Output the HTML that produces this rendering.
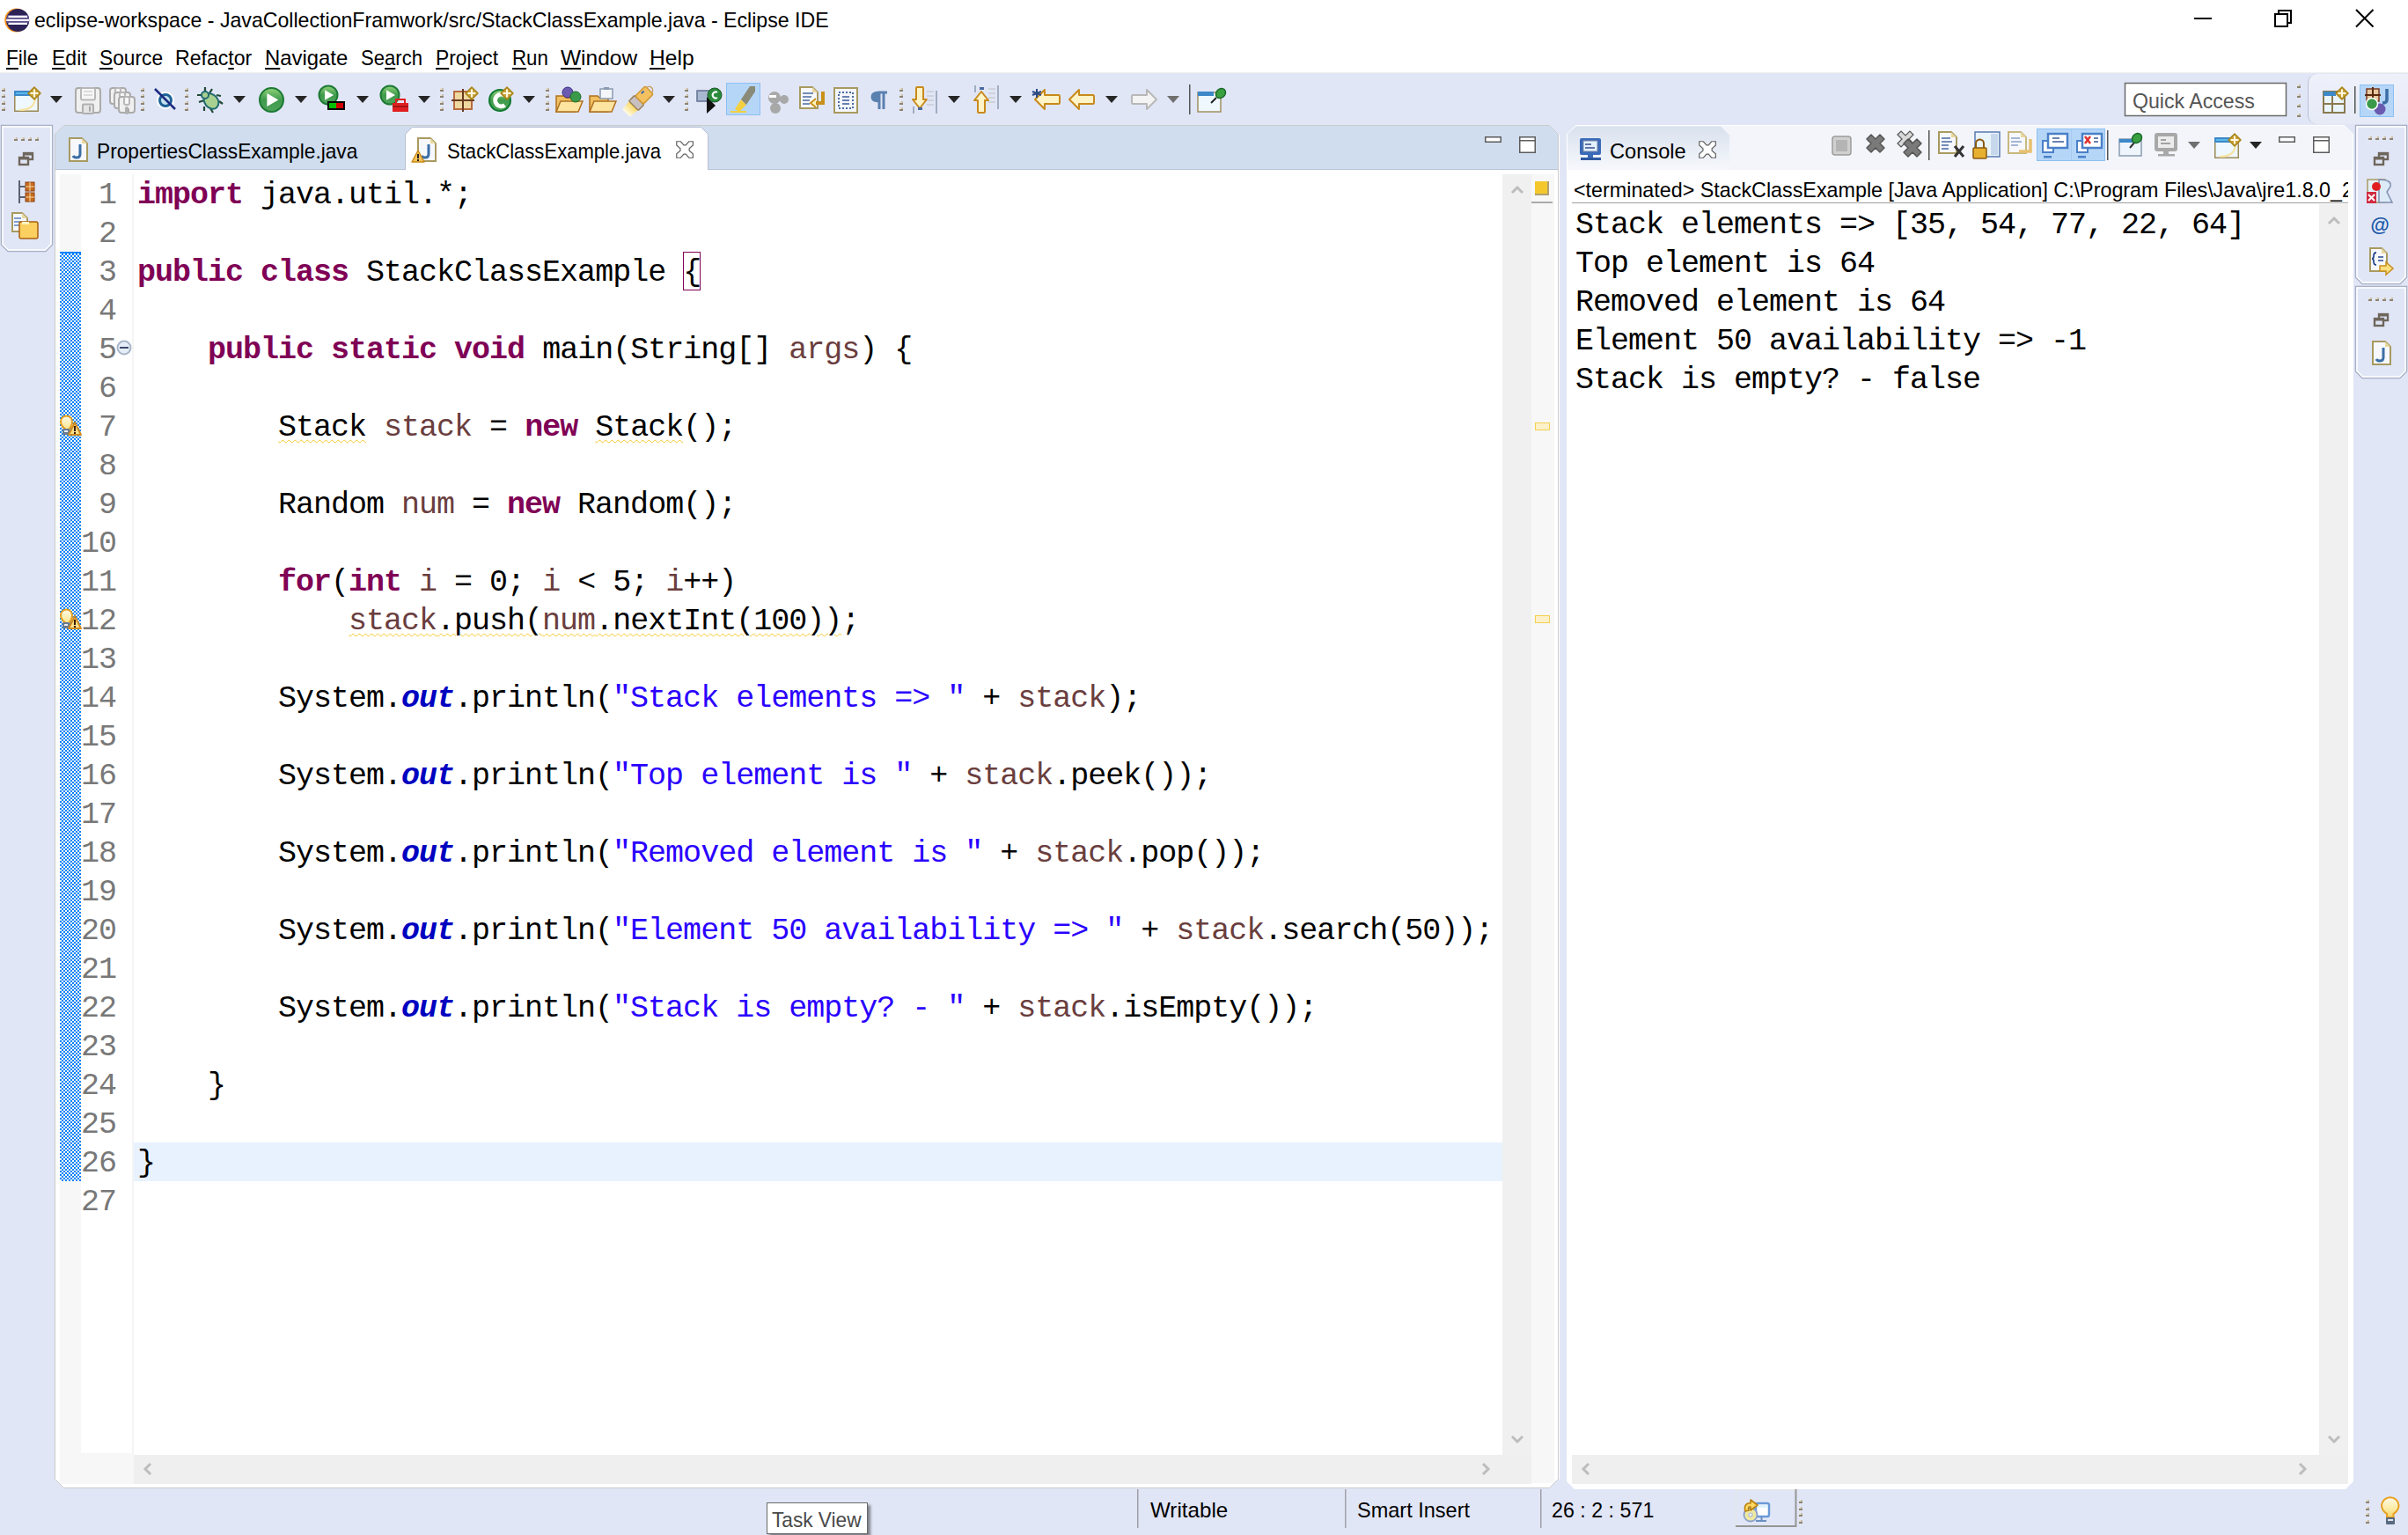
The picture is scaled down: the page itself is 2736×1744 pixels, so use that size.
<!DOCTYPE html>
<html><head><meta charset="utf-8"><title>Eclipse IDE</title>
<style>
html,body{margin:0;padding:0;}
body{width:2736px;height:1744px;overflow:hidden;position:relative;background:#e1e6f6;font-family:"Liberation Sans",sans-serif;}
.t{position:absolute;font-size:24px;line-height:30px;white-space:pre;}
.code{position:absolute;font-family:"Liberation Mono",monospace;font-size:35px;letter-spacing:-1px;line-height:44px;white-space:pre;color:#000;}
.k{color:#7f0055;font-weight:bold;}
.s{color:#2a00ff;}
.v{color:#6a3e3e;}
.f{color:#0000c0;font-weight:bold;font-style:italic;}
.w{text-decoration:underline wavy #f4c82d;text-decoration-thickness:1px;text-underline-offset:4px;}
.u{text-decoration:underline;text-decoration-thickness:2px;text-underline-offset:3px;}
</style></head><body>

<div style="position:absolute;left:0px;top:0px;width:2736px;height:82px;background:#fff"></div>
<div style="position:absolute;left:0px;top:82px;width:2736px;height:1px;background:#f0f0f0"></div>
<svg style="position:absolute;left:0px;top:0px;" width="40" height="46" viewBox="0 0 40 46"><defs><clipPath id="ecl"><circle cx="20.2" cy="23" r="13"/></clipPath></defs><circle cx="18.6" cy="23" r="13.4" fill="#f7941e"/><circle cx="20.2" cy="23" r="13" fill="#2c2255"/>
<g clip-path="url(#ecl)"><rect x="6" y="17" width="30" height="9" fill="#5a4d8c"/>
<rect x="9.5" y="17.8" width="21.5" height="2.2" fill="#fff"/><rect x="7" y="21.8" width="27" height="2.2" fill="#fff"/><rect x="9.5" y="25.8" width="21.5" height="2.2" fill="#fff"/></g></svg>
<div class="t" style="left:39.0px;top:8px;color:#000;transform:scaleX(0.9641);transform-origin:0 0;">eclipse-workspace - JavaCollectionFramwork/src/StackClassExample.java - Eclipse IDE</div>
<svg style="position:absolute;left:2480px;top:0px;" width="256" height="42" viewBox="0 0 256 42"><rect x="13" y="20" width="20" height="2" fill="#000"/>
<rect x="109" y="12" width="14" height="14" fill="none" stroke="#000" stroke-width="2"/>
<rect x="105" y="16" width="14" height="14" fill="#fff" stroke="#000" stroke-width="2"/>
<path d="M197 11 L216.5 30.5 M216.5 11 L197 30.5" stroke="#000" stroke-width="2"/></svg>
<div class="t" style="left:7.2px;top:51px;color:#000;transform:scaleX(0.9421);transform-origin:0 0;"><span class="u">F</span>ile</div>
<div class="t" style="left:58.5px;top:51px;color:#000;transform:scaleX(0.9585);transform-origin:0 0;"><span class="u">E</span>dit</div>
<div class="t" style="left:112.7px;top:51px;color:#000;transform:scaleX(0.948);transform-origin:0 0;"><span class="u">S</span>ource</div>
<div class="t" style="left:198.7px;top:51px;color:#000;transform:scaleX(0.9625);transform-origin:0 0;">Refac<span class="u">t</span>or</div>
<div class="t" style="left:300.8px;top:51px;color:#000;transform:scaleX(0.9947);transform-origin:0 0;"><span class="u">N</span>avigate</div>
<div class="t" style="left:409.5px;top:51px;color:#000;transform:scaleX(0.9203);transform-origin:0 0;">Se<span class="u">a</span>rch</div>
<div class="t" style="left:495.1px;top:51px;color:#000;transform:scaleX(0.952);transform-origin:0 0;"><span class="u">P</span>roject</div>
<div class="t" style="left:581.5px;top:51px;color:#000;transform:scaleX(0.9279);transform-origin:0 0;"><span class="u">R</span>un</div>
<div class="t" style="left:637.1px;top:51px;color:#000;transform:scaleX(1.02);transform-origin:0 0;"><span class="u">W</span>indow</div>
<div class="t" style="left:738.2px;top:51px;color:#000;transform:scaleX(1.025);transform-origin:0 0;"><span class="u">H</span>elp</div>
<svg style="position:absolute;left:0;top:0" width="2736" height="142" viewBox="0 0 2736 142"><defs>
<linearGradient id="gg" x1="0" y1="0" x2="0" y2="1"><stop offset="0" stop-color="#8fd27a"/><stop offset="0.5" stop-color="#3f9a4c"/><stop offset="1" stop-color="#4ea55a"/></linearGradient>
<linearGradient id="bulb" x1="0" y1="0" x2="0" y2="1"><stop offset="0" stop-color="#fffbe8"/><stop offset="0.6" stop-color="#fbeaa0"/><stop offset="1" stop-color="#f8d060"/></linearGradient>
</defs><rect x="2" y="100" width="4" height="4" fill="#8c8472"/><rect x="2" y="100" width="4" height="2" fill="#c8c0b0"/><rect x="2" y="100" width="2" height="2" fill="#e8e2d6"/><rect x="2" y="107" width="4" height="4" fill="#8c8472"/><rect x="2" y="107" width="4" height="2" fill="#c8c0b0"/><rect x="2" y="107" width="2" height="2" fill="#e8e2d6"/><rect x="2" y="115" width="4" height="4" fill="#8c8472"/><rect x="2" y="115" width="4" height="2" fill="#c8c0b0"/><rect x="2" y="115" width="2" height="2" fill="#e8e2d6"/><rect x="2" y="122" width="4" height="4" fill="#8c8472"/><rect x="2" y="122" width="4" height="2" fill="#c8c0b0"/><rect x="2" y="122" width="2" height="2" fill="#e8e2d6"/><rect x="16.75" y="103.75" width="26.5" height="22.5" fill="#eef8fe" stroke="#9b8a55" stroke-width="1.5"/><path d="M22 125 Q38 125 40 113" fill="none" stroke="#f7e3a0" stroke-width="2"/><rect x="16" y="103" width="22" height="6" fill="#3d88c8"/><rect x="18" y="105" width="18" height="2" fill="#5ab8ea"/><path d="M32 106 L39 99 L46 106 L39 113 Z" fill="#c8a23a" stroke="#a88418" stroke-width="1.5" stroke-linejoin="round"/><path d="M39 101.5 V110.5 M34.5 106 H43.5" stroke="#fff8e0" stroke-width="2"/><path d="M57 109 L71 109 L64 117 Z" fill="#262626"/><rect x="86" y="100" width="28" height="28" rx="3" fill="#f0f0f0" stroke="#ababab" stroke-width="2"/><rect x="92" y="100" width="16" height="13.5" rx="2" fill="#f7f7f7" stroke="#b8b8b8" stroke-width="2"/><path d="M95 104 H105 M95 108 H105" stroke="#d4d4d4" stroke-width="1.5"/><rect x="94" y="118.5" width="12" height="10.5" rx="1" fill="#e4e4e4" stroke="#b0b0b0" stroke-width="2"/><rect x="101.0" y="120.6" width="2" height="6.0" fill="#a8a8a8"/><rect x="125" y="100" width="18" height="18" rx="3" fill="#f0f0f0" stroke="#ababab" stroke-width="2"/><rect x="131" y="100" width="6" height="9.0" rx="2" fill="#f7f7f7" stroke="#b8b8b8" stroke-width="2"/><path d="M134 104 H134 M134 108 H134" stroke="#d4d4d4" stroke-width="1.5"/><rect x="133" y="112.0" width="2" height="7.0" rx="1" fill="#e4e4e4" stroke="#b0b0b0" stroke-width="2"/><rect x="135.0" y="113.4" width="2" height="4.0" fill="#a8a8a8"/><rect x="130" y="105" width="18" height="18" rx="3" fill="#f0f0f0" stroke="#ababab" stroke-width="2"/><rect x="136" y="105" width="6" height="9.0" rx="2" fill="#f7f7f7" stroke="#b8b8b8" stroke-width="2"/><path d="M139 109 H139 M139 113 H139" stroke="#d4d4d4" stroke-width="1.5"/><rect x="138" y="117.0" width="2" height="7.0" rx="1" fill="#e4e4e4" stroke="#b0b0b0" stroke-width="2"/><rect x="140.0" y="118.4" width="2" height="4.0" fill="#a8a8a8"/><rect x="135" y="110" width="18" height="18" rx="3" fill="#f0f0f0" stroke="#ababab" stroke-width="2"/><rect x="141" y="110" width="6" height="9.0" rx="2" fill="#f7f7f7" stroke="#b8b8b8" stroke-width="2"/><path d="M144 114 H144 M144 118 H144" stroke="#d4d4d4" stroke-width="1.5"/><rect x="143" y="122.0" width="2" height="7.0" rx="1" fill="#e4e4e4" stroke="#b0b0b0" stroke-width="2"/><rect x="145.0" y="123.4" width="2" height="4.0" fill="#a8a8a8"/><rect x="160" y="100" width="4" height="4" fill="#8c8472"/><rect x="160" y="100" width="4" height="2" fill="#c8c0b0"/><rect x="160" y="100" width="2" height="2" fill="#e8e2d6"/><rect x="160" y="107" width="4" height="4" fill="#8c8472"/><rect x="160" y="107" width="4" height="2" fill="#c8c0b0"/><rect x="160" y="107" width="2" height="2" fill="#e8e2d6"/><rect x="160" y="115" width="4" height="4" fill="#8c8472"/><rect x="160" y="115" width="4" height="2" fill="#c8c0b0"/><rect x="160" y="115" width="2" height="2" fill="#e8e2d6"/><rect x="160" y="122" width="4" height="4" fill="#8c8472"/><rect x="160" y="122" width="4" height="2" fill="#c8c0b0"/><rect x="160" y="122" width="2" height="2" fill="#e8e2d6"/><circle cx="188" cy="114" r="7" fill="#c5e0ee" stroke="#fff" stroke-width="6"/><circle cx="188" cy="114" r="6.5" fill="#c5e0ee" stroke="#1c6296" stroke-width="3"/><path d="M176 101 L199 124" stroke="#1b2a80" stroke-width="2.5"/><rect x="210" y="100" width="4" height="4" fill="#8c8472"/><rect x="210" y="100" width="4" height="2" fill="#c8c0b0"/><rect x="210" y="100" width="2" height="2" fill="#e8e2d6"/><rect x="210" y="107" width="4" height="4" fill="#8c8472"/><rect x="210" y="107" width="4" height="2" fill="#c8c0b0"/><rect x="210" y="107" width="2" height="2" fill="#e8e2d6"/><rect x="210" y="115" width="4" height="4" fill="#8c8472"/><rect x="210" y="115" width="4" height="2" fill="#c8c0b0"/><rect x="210" y="115" width="2" height="2" fill="#e8e2d6"/><rect x="210" y="122" width="4" height="4" fill="#8c8472"/><rect x="210" y="122" width="4" height="2" fill="#c8c0b0"/><rect x="210" y="122" width="2" height="2" fill="#e8e2d6"/><g stroke="#1f4a38" stroke-width="2.2" fill="none"><path d="M233 99 V106 M241 101 L238 106 M224 108 H231 M251 109 L246 108 M226 116 L232 114 M253 118 L249 115 M232 126 V121 M242 128 L239 123"/></g><ellipse cx="240" cy="115" rx="7.5" ry="9.5" transform="rotate(-40 240 115)" fill="#a8d090" stroke="#226a70" stroke-width="2"/><circle cx="233" cy="108" r="4" fill="#a8d090" stroke="#226a70" stroke-width="2"/><path d="M265 109 L279 109 L272 117 Z" fill="#262626"/><circle cx="308.5" cy="113.5" r="13.5" fill="url(#gg)" stroke="#1d7a34" stroke-width="2"/><path d="M303.4 106.1 L316.3 113.5 L303.4 120.9 Z" fill="#fff"/><path d="M335 109 L349 109 L342 117 Z" fill="#262626"/><circle cx="373" cy="108" r="10.5" fill="url(#gg)" stroke="#1d7a34" stroke-width="2"/><path d="M369.0 102.2 L379.1 108 L369.0 113.8 Z" fill="#fff"/><rect x="372" y="115" width="20" height="10" fill="#000"/><rect x="374" y="117" width="8" height="6" fill="#00c000"/><rect x="382" y="117" width="8" height="6" fill="#d00000"/><path d="M405 109 L419 109 L412 117 Z" fill="#262626"/><circle cx="443" cy="108" r="10.5" fill="url(#gg)" stroke="#1d7a34" stroke-width="2"/><path d="M439.0 102.2 L449.1 108 L439.0 113.8 Z" fill="#fff"/><rect x="446" y="117" width="18" height="10" fill="#e02020"/><rect x="450" y="113" width="10" height="5" fill="none" stroke="#e02020" stroke-width="2"/><path d="M446 121 H464" stroke="#901010" stroke-width="1.5"/><path d="M475 109 L489 109 L482 117 Z" fill="#262626"/><rect x="500" y="100" width="4" height="4" fill="#8c8472"/><rect x="500" y="100" width="4" height="2" fill="#c8c0b0"/><rect x="500" y="100" width="2" height="2" fill="#e8e2d6"/><rect x="500" y="107" width="4" height="4" fill="#8c8472"/><rect x="500" y="107" width="4" height="2" fill="#c8c0b0"/><rect x="500" y="107" width="2" height="2" fill="#e8e2d6"/><rect x="500" y="115" width="4" height="4" fill="#8c8472"/><rect x="500" y="115" width="4" height="2" fill="#c8c0b0"/><rect x="500" y="115" width="2" height="2" fill="#e8e2d6"/><rect x="500" y="122" width="4" height="4" fill="#8c8472"/><rect x="500" y="122" width="4" height="2" fill="#c8c0b0"/><rect x="500" y="122" width="2" height="2" fill="#e8e2d6"/><rect x="516" y="104" width="20" height="20" fill="#eed8a0" stroke="#b86a40" stroke-width="2"/><path d="M526 101 V127 M513 114 H539" stroke="#6a3a20" stroke-width="2"/><path d="M529 106 L536 99 L543 106 L536 113 Z" fill="#c8a23a" stroke="#a88418" stroke-width="1.5" stroke-linejoin="round"/><path d="M536 101.5 V110.5 M531.5 106 H540.5" stroke="#fff8e0" stroke-width="2"/><circle cx="568" cy="114" r="12" fill="url(#gg)" stroke="#107a30" stroke-width="2"/><path d="M573.5 108.5 A6.8 6.8 0 1 0 573.5 119.5" fill="none" stroke="#fff" stroke-width="5"/><path d="M569 106 L576 99 L583 106 L576 113 Z" fill="#c8a23a" stroke="#a88418" stroke-width="1.5" stroke-linejoin="round"/><path d="M576 101.5 V110.5 M571.5 106 H580.5" stroke="#fff8e0" stroke-width="2"/><path d="M594 109 L608 109 L601 117 Z" fill="#262626"/><rect x="620" y="100" width="4" height="4" fill="#8c8472"/><rect x="620" y="100" width="4" height="2" fill="#c8c0b0"/><rect x="620" y="100" width="2" height="2" fill="#e8e2d6"/><rect x="620" y="107" width="4" height="4" fill="#8c8472"/><rect x="620" y="107" width="4" height="2" fill="#c8c0b0"/><rect x="620" y="107" width="2" height="2" fill="#e8e2d6"/><rect x="620" y="115" width="4" height="4" fill="#8c8472"/><rect x="620" y="115" width="4" height="2" fill="#c8c0b0"/><rect x="620" y="115" width="2" height="2" fill="#e8e2d6"/><rect x="620" y="122" width="4" height="4" fill="#8c8472"/><rect x="620" y="122" width="4" height="2" fill="#c8c0b0"/><rect x="620" y="122" width="2" height="2" fill="#e8e2d6"/><path d="M632 109 h9 l2 2 h10 v16 h-21 Z" fill="#f0c060" stroke="#b07020" stroke-width="1.5"/><path d="M632 127 l5 -12 h25 l-5 12 Z" fill="#fde4a0" stroke="#b07020" stroke-width="1.5"/><circle cx="645" cy="105" r="6" fill="#6a5ab0" stroke="#3a2a80" stroke-width="1"/><circle cx="654" cy="110" r="6" fill="#3a9a4a" stroke="#1a6a2a" stroke-width="1"/><path d="M670 109 h9 l2 2 h10 v16 h-21 Z" fill="#f0c060" stroke="#b07020" stroke-width="1.5"/><path d="M670 127 l5 -12 h25 l-5 12 Z" fill="#fde4a0" stroke="#b07020" stroke-width="1.5"/><rect x="682" y="101" width="14" height="11" fill="#f4f6fa" stroke="#8a9ab0" stroke-width="1.5"/><rect x="686" y="99" width="6" height="3" fill="#8a9ab0"/><defs><linearGradient id="tipg" x1="0" y1="0" x2="1" y2="0"><stop offset="0" stop-color="#fffbe8"/><stop offset="1" stop-color="#f8d860"/></linearGradient></defs><g transform="translate(727 113) rotate(-45)"><path d="M-22 -6 L-10 -7 V7 L-22 6 Z" fill="url(#tipg)"/><rect x="-10" y="-7.5" width="9" height="15" rx="1" fill="#c8c0c0" stroke="#9a8058" stroke-width="1.5"/><rect x="-1" y="-6.5" width="16" height="13" rx="2" fill="#f4c060" stroke="#d09838" stroke-width="1.5"/><rect x="6" y="-4.5" width="4" height="2" fill="#3a6ab8"/><path d="M15 -4 A4 4 0 0 1 15 4" fill="none" stroke="#c8a060" stroke-width="1.5"/></g><path d="M753 109 L767 109 L760 117 Z" fill="#262626"/><rect x="778" y="100" width="4" height="4" fill="#8c8472"/><rect x="778" y="100" width="4" height="2" fill="#c8c0b0"/><rect x="778" y="100" width="2" height="2" fill="#e8e2d6"/><rect x="778" y="107" width="4" height="4" fill="#8c8472"/><rect x="778" y="107" width="4" height="2" fill="#c8c0b0"/><rect x="778" y="107" width="2" height="2" fill="#e8e2d6"/><rect x="778" y="115" width="4" height="4" fill="#8c8472"/><rect x="778" y="115" width="4" height="2" fill="#c8c0b0"/><rect x="778" y="115" width="2" height="2" fill="#e8e2d6"/><rect x="778" y="122" width="4" height="4" fill="#8c8472"/><rect x="778" y="122" width="4" height="2" fill="#c8c0b0"/><rect x="778" y="122" width="2" height="2" fill="#e8e2d6"/><rect x="792" y="103" width="16" height="12" fill="#a8b8d0" stroke="#607090" stroke-width="1.5"/><path d="M803 110 L813 120 L803 129 Z" fill="#111"/><circle cx="812" cy="108" r="8" fill="#2a8a3a" stroke="#1a5a2a" stroke-width="1"/><path d="M815 105 A3.5 3.5 0 1 0 815 111" fill="none" stroke="#fff" stroke-width="2"/><rect x="825.5" y="94.5" width="38" height="36" fill="#b6d6f8" stroke="#8cc0f2" stroke-width="1"/><path d="M830 127 H848" stroke="#f0d040" stroke-width="2"/><path d="M835 124 L842 113 L848 119 L840 127 Z" fill="#f4d040"/><path d="M842 113 L852 98 L858 98 L858 104 L848 119 Z" fill="#8a8a78"/><g fill="#a8a8a8"><circle cx="880" cy="111" r="7"/><circle cx="891" cy="113" r="5"/><circle cx="881" cy="123" r="6"/></g><rect x="874" y="108" width="8" height="3" fill="#fff"/><path d="M909 99 H923 L929 105 V123 H909 Z" fill="#f6f8fc" stroke="#a89a60" stroke-width="2"/><path d="M923 99 V105 H929 Z" fill="#e8d8a0"/><path d="M912 106 H924 M912 110 H922 M912 114 H920 M912 118 H920" stroke="#4a6aa0" stroke-width="1.5"/><path d="M935 104 V117 H924" fill="none" stroke="#c8901a" stroke-width="4"/><path d="M927 112 L921 117 L927 122" fill="#fff2c0" stroke="#c8901a" stroke-width="2"/><rect x="948" y="100" width="26" height="28" fill="#f4f6fa" stroke="#a89a60" stroke-width="2"/><rect x="953" y="105" width="16" height="18" fill="none" stroke="#4a6aa0" stroke-width="2" stroke-dasharray="2 2"/><path d="M957 110 H965 M957 114 H965 M957 118 H965" stroke="#3a5a9a" stroke-width="1.5"/><path d="M999 105 H1008 M999 105 V124 M1004 105 V124 M999 105 Q991 105 991 110 Q991 115 999 115" fill="#5a80b0" stroke="#5a80b0" stroke-width="3"/><rect x="1022" y="100" width="4" height="4" fill="#8c8472"/><rect x="1022" y="100" width="4" height="2" fill="#c8c0b0"/><rect x="1022" y="100" width="2" height="2" fill="#e8e2d6"/><rect x="1022" y="107" width="4" height="4" fill="#8c8472"/><rect x="1022" y="107" width="4" height="2" fill="#c8c0b0"/><rect x="1022" y="107" width="2" height="2" fill="#e8e2d6"/><rect x="1022" y="115" width="4" height="4" fill="#8c8472"/><rect x="1022" y="115" width="4" height="2" fill="#c8c0b0"/><rect x="1022" y="115" width="2" height="2" fill="#e8e2d6"/><rect x="1022" y="122" width="4" height="4" fill="#8c8472"/><rect x="1022" y="122" width="4" height="2" fill="#c8c0b0"/><rect x="1022" y="122" width="2" height="2" fill="#e8e2d6"/><path d="M1045 123 L1037 113 H1041 V100 Q1041 99 1042 99 H1048 Q1049 99 1049 100 V113 H1053 Z" fill="#fff3c8" stroke="#c88a1a" stroke-width="2" stroke-linejoin="round"/><path d="M1053 104 H1061 M1053 109 H1061 M1053 114 H1061 M1053 119 H1061" stroke="#c8ccd4" stroke-width="1.5"/><path d="M1064 103 V129" stroke="#8a9ab0" stroke-width="1.5"/><rect x="1043" y="122" width="5" height="3" fill="#4a6aa0"/><path d="M1038 121 V129" stroke="#8a9ab0" stroke-width="1.5"/><path d="M1077 109 L1091 109 L1084 117 Z" fill="#262626"/><path d="M1115 104 L1107 114 H1111 V127 Q1111 128 1112 128 H1118 Q1119 128 1119 127 V114 H1123 Z" fill="#fff3c8" stroke="#c88a1a" stroke-width="2" stroke-linejoin="round"/><path d="M1123 101 H1131 M1123 106 H1131 M1123 111 H1131 M1123 116 H1131" stroke="#c8ccd4" stroke-width="1.5"/><path d="M1134 97 V124" stroke="#8a9ab0" stroke-width="1.5"/><rect x="1113" y="99" width="5" height="3" fill="#4a6aa0"/><path d="M1108 97 V105" stroke="#8a9ab0" stroke-width="1.5"/><path d="M1147 109 L1161 109 L1154 117 Z" fill="#262626"/><path d="M1176 113 L1187 102 V108 H1203 Q1204 108 1204 110 V116 Q1204 118 1203 118 H1187 V124 Z" fill="#fff3c8" stroke="#c88a1a" stroke-width="2" stroke-linejoin="round"/><path d="M1178 101 V111 M1173 104 L1183 108 M1183 104 L1173 108" stroke="#2a4a80" stroke-width="2"/><path d="M1215 113 L1226 102 V108 H1242 Q1243 108 1243 110 V116 Q1243 118 1242 118 H1226 V124 Z" fill="#fff3c8" stroke="#c88a1a" stroke-width="2" stroke-linejoin="round"/><path d="M1256 109 L1270 109 L1263 117 Z" fill="#262626"/><path d="M1314 113 L1303 102 V108 H1287 Q1286 108 1286 110 V116 Q1286 118 1287 118 H1303 V124 Z" fill="#f4f4f4" stroke="#b8b8b8" stroke-width="2" stroke-linejoin="round"/><path d="M1326 109 L1340 109 L1333 117 Z" fill="#707070"/><rect x="1351" y="96" width="1.5" height="34" fill="#555"/><rect x="1361" y="105" width="26" height="22" fill="#eef8fe" stroke="#a09060" stroke-width="1.5"/><rect x="1361" y="104" width="18" height="5" fill="#3d88c8"/><path d="M1376 117 L1382 111" stroke="#222" stroke-width="2"/><ellipse cx="1387" cy="106" rx="5" ry="6" transform="rotate(45 1387 106)" fill="#3aa040" stroke="#1a6a2a" stroke-width="1.5"/><rect x="2414.5" y="94.5" width="183" height="37" fill="#fff" stroke="#6a6a6a" stroke-width="1.5"/><rect x="2610" y="96" width="4" height="4" fill="#8c8472"/><rect x="2610" y="96" width="4" height="2" fill="#c8c0b0"/><rect x="2610" y="96" width="2" height="2" fill="#e8e2d6"/><rect x="2610" y="107" width="4" height="4" fill="#8c8472"/><rect x="2610" y="107" width="4" height="2" fill="#c8c0b0"/><rect x="2610" y="107" width="2" height="2" fill="#e8e2d6"/><rect x="2610" y="118" width="4" height="4" fill="#8c8472"/><rect x="2610" y="118" width="4" height="2" fill="#c8c0b0"/><rect x="2610" y="118" width="2" height="2" fill="#e8e2d6"/><rect x="2610" y="129" width="4" height="4" fill="#8c8472"/><rect x="2610" y="129" width="4" height="2" fill="#c8c0b0"/><rect x="2610" y="129" width="2" height="2" fill="#e8e2d6"/></svg>
<div class="t" style="left:2422.6px;top:100px;color:#555;transform:scaleX(0.9634);transform-origin:0 0;">Quick Access</div>
<div style="position:absolute;left:2622px;top:84px;width:130px;height:57px;background:linear-gradient(#eef1fa,#e6eaf6);border-left:1px solid #b8c0d4;border-radius:10px 0 0 10px"></div>
<svg style="position:absolute;left:0;top:0" width="2736" height="142" viewBox="0 0 2736 142"><defs>
<linearGradient id="gg" x1="0" y1="0" x2="0" y2="1"><stop offset="0" stop-color="#8fd27a"/><stop offset="0.5" stop-color="#3f9a4c"/><stop offset="1" stop-color="#4ea55a"/></linearGradient>
<linearGradient id="bulb" x1="0" y1="0" x2="0" y2="1"><stop offset="0" stop-color="#fffbe8"/><stop offset="0.6" stop-color="#fbeaa0"/><stop offset="1" stop-color="#f8d060"/></linearGradient>
</defs><rect x="2640" y="104" width="24" height="24" fill="#eaf4fb" stroke="#8a7a50" stroke-width="2"/><rect x="2640" y="104" width="14" height="5" fill="#3d88c8"/><path d="M2650 109 V128 M2640 118 H2664" stroke="#8a7a50" stroke-width="2"/><path d="M2654 106 L2661 99 L2668 106 L2661 113 Z" fill="#c8a23a" stroke="#a88418" stroke-width="1.5" stroke-linejoin="round"/><path d="M2661 101.5 V110.5 M2656.5 106 H2665.5" stroke="#fff8e0" stroke-width="2"/><rect x="2675" y="98" width="1.5" height="31" fill="#555"/><rect x="2681.5" y="96.5" width="38" height="36" fill="#b6d6f8" stroke="#8cc0f2" stroke-width="1"/><rect x="2689" y="101" width="14" height="14" fill="#e8c8a0" stroke="#7a3a20" stroke-width="1.5"/><path d="M2696 99 V117 M2687 108 H2705" stroke="#5a2a10" stroke-width="2"/><path d="M2712 101 V113 Q2712 117 2707 117" fill="none" stroke="#3b6ea5" stroke-width="3.5"/><circle cx="2704" cy="124" r="6.5" fill="#6a5ab0"/><circle cx="2695" cy="118" r="6.5" fill="#3a9a4a" stroke="#fff" stroke-width="1.5"/></svg>
<svg style="position:absolute;left:0;top:0" width="2736" height="440" viewBox="0 0 2736 440"><defs>
<linearGradient id="gg" x1="0" y1="0" x2="0" y2="1"><stop offset="0" stop-color="#8fd27a"/><stop offset="0.5" stop-color="#3f9a4c"/><stop offset="1" stop-color="#4ea55a"/></linearGradient>
<linearGradient id="bulb" x1="0" y1="0" x2="0" y2="1"><stop offset="0" stop-color="#fffbe8"/><stop offset="0.6" stop-color="#fbeaa0"/><stop offset="1" stop-color="#f8d060"/></linearGradient>
</defs><path d="M1.5 142.5 H59.5 V278 L52 285.5 H9 L1.5 278 Z" fill="#e1e6f6" stroke="#a9b1c6" stroke-width="1.5"/><path d="M3 144 H58 V277.5 L51.5 284 H9.5 L3 277.5 Z" fill="none" stroke="#fff" stroke-width="1.5"/><rect x="16" y="156" width="4" height="4" fill="#8c8472"/><rect x="16" y="156" width="4" height="2" fill="#c8c0b0"/><rect x="16" y="156" width="2" height="2" fill="#e8e2d6"/><rect x="24" y="156" width="4" height="4" fill="#8c8472"/><rect x="24" y="156" width="4" height="2" fill="#c8c0b0"/><rect x="24" y="156" width="2" height="2" fill="#e8e2d6"/><rect x="32" y="156" width="4" height="4" fill="#8c8472"/><rect x="32" y="156" width="4" height="2" fill="#c8c0b0"/><rect x="32" y="156" width="2" height="2" fill="#e8e2d6"/><rect x="40" y="156" width="4" height="4" fill="#8c8472"/><rect x="40" y="156" width="4" height="2" fill="#c8c0b0"/><rect x="40" y="156" width="2" height="2" fill="#e8e2d6"/><rect x="27" y="174" width="10" height="7" fill="none" stroke="#6e665c" stroke-width="2.4"/><rect x="26" y="173" width="12" height="3.5" fill="#6e665c"/><rect x="22" y="179" width="10" height="8" fill="#e1e6f6" stroke="#6e665c" stroke-width="2.4"/><rect x="21" y="178" width="12" height="3.5" fill="#6e665c"/><path d="M22 205 V231 M22 212 H30 M22 224 H30" stroke="#5a6070" stroke-width="2"/><rect x="29" y="207" width="10" height="10" fill="#c86a20" stroke="#8a4010" stroke-width="1"/><rect x="29" y="219" width="10" height="10" fill="#c86a20" stroke="#8a4010" stroke-width="1"/><path d="M34 207 V217 M29 212 H39 M34 219 V229 M29 224 H39" stroke="#f8e0a0" stroke-width="1"/><path d="M14 242 H25 L31 248 V263 H14 Z" fill="#f6f8fc" stroke="#a89a60" stroke-width="2"/><path d="M25 242 V248 H31 Z" fill="#e8d8a0"/><path d="M16 248 H24 M16 252 H24 M16 256 H24" stroke="#5a80c0" stroke-width="1.5"/><rect x="22" y="252" width="21" height="19" rx="2" fill="#fcd060" stroke="#a86010" stroke-width="1.5"/><rect x="25" y="252" width="8" height="3" fill="#fff3c0"/><path d="M2676.5 142.5 H2734.5 V315 L2727 322.5 H2684 L2676.5 315 Z" fill="#e1e6f6" stroke="#a9b1c6" stroke-width="1.5"/><path d="M2678 144 H2733 V314.5 L2726.5 321 H2684.5 L2678 314.5 Z" fill="none" stroke="#fff" stroke-width="1.5"/><rect x="2691" y="155" width="4" height="4" fill="#8c8472"/><rect x="2691" y="155" width="4" height="2" fill="#c8c0b0"/><rect x="2691" y="155" width="2" height="2" fill="#e8e2d6"/><rect x="2699" y="155" width="4" height="4" fill="#8c8472"/><rect x="2699" y="155" width="4" height="2" fill="#c8c0b0"/><rect x="2699" y="155" width="2" height="2" fill="#e8e2d6"/><rect x="2707" y="155" width="4" height="4" fill="#8c8472"/><rect x="2707" y="155" width="4" height="2" fill="#c8c0b0"/><rect x="2707" y="155" width="2" height="2" fill="#e8e2d6"/><rect x="2715" y="155" width="4" height="4" fill="#8c8472"/><rect x="2715" y="155" width="4" height="2" fill="#c8c0b0"/><rect x="2715" y="155" width="2" height="2" fill="#e8e2d6"/><rect x="2703" y="174" width="10" height="7" fill="none" stroke="#6e665c" stroke-width="2.4"/><rect x="2702" y="173" width="12" height="3.5" fill="#6e665c"/><rect x="2698" y="179" width="10" height="8" fill="#e1e6f6" stroke="#6e665c" stroke-width="2.4"/><rect x="2697" y="178" width="12" height="3.5" fill="#6e665c"/><rect x="2690" y="204" width="20" height="26" fill="#e4f0f8" stroke="#a89a60" stroke-width="1.5"/><path d="M2703 204 Q2718 204 2716 212 L2712 218 L2718 230 H2703 Z" fill="#dcebf6" stroke="#8090b0" stroke-width="1.5"/><circle cx="2700" cy="212" r="5" fill="#e02020"/><rect x="2689" y="218" width="11" height="13" fill="#d02a40"/><path d="M2691 221 L2698 228 M2698 221 L2691 228" stroke="#fff" stroke-width="2"/><text x="2693" y="263" font-family="Liberation Sans" font-weight="bold" font-style="italic" font-size="22" fill="#1a5aa8">@</text><path d="M2693 282 H2706 L2712 288 V308 H2693 Z" fill="#f6f8fc" stroke="#a89a60" stroke-width="2"/><path d="M2706 282 V288 H2712 Z" fill="#e8d8a0"/><path d="M2700 287 Q2697 287 2697 291 Q2697 294 2695 294 Q2697 294 2697 297 Q2697 301 2700 301" fill="none" stroke="#2a4a90" stroke-width="1.8"/><path d="M2702 292 H2708 M2702 296 H2708" stroke="#2a4a90" stroke-width="1.5"/><path d="M2704 302 H2711 V298 L2719 305 L2711 312 V308 H2704 Z" fill="#fce080" stroke="#c89020" stroke-width="1.5"/><path d="M2676.5 325.5 H2734.5 V422 L2727 429.5 H2684 L2676.5 422 Z" fill="#e1e6f6" stroke="#a9b1c6" stroke-width="1.5"/><path d="M2678 327 H2733 V421.5 L2726.5 428 H2684.5 L2678 421.5 Z" fill="none" stroke="#fff" stroke-width="1.5"/><rect x="2691" y="338" width="4" height="4" fill="#8c8472"/><rect x="2691" y="338" width="4" height="2" fill="#c8c0b0"/><rect x="2691" y="338" width="2" height="2" fill="#e8e2d6"/><rect x="2699" y="338" width="4" height="4" fill="#8c8472"/><rect x="2699" y="338" width="4" height="2" fill="#c8c0b0"/><rect x="2699" y="338" width="2" height="2" fill="#e8e2d6"/><rect x="2707" y="338" width="4" height="4" fill="#8c8472"/><rect x="2707" y="338" width="4" height="2" fill="#c8c0b0"/><rect x="2707" y="338" width="2" height="2" fill="#e8e2d6"/><rect x="2715" y="338" width="4" height="4" fill="#8c8472"/><rect x="2715" y="338" width="4" height="2" fill="#c8c0b0"/><rect x="2715" y="338" width="2" height="2" fill="#e8e2d6"/><rect x="2703" y="357" width="10" height="7" fill="none" stroke="#6e665c" stroke-width="2.4"/><rect x="2702" y="356" width="12" height="3.5" fill="#6e665c"/><rect x="2698" y="362" width="10" height="8" fill="#e1e6f6" stroke="#6e665c" stroke-width="2.4"/><rect x="2697" y="361" width="12" height="3.5" fill="#6e665c"/><path d="M2696 388 H2710 L2716 394 V414 H2696 Z" fill="#f6f8fc" stroke="#a89a60" stroke-width="2"/><path d="M2710 388 V394 H2716 Z" fill="#e8d8a0"/><path d="M2708 395 V406 Q2708 410 2704 410 Q2701 410 2700 408" fill="none" stroke="#3b6ea5" stroke-width="3"/></svg>
<svg style="position:absolute;left:0;top:0" width="1790" height="1700" viewBox="0 0 1790 1700"><path d="M62.5 152.5 L72.5 142.5 H1760.5 L1770.5 152.5 V1680.5 L1760.5 1690.5 H72.5 L62.5 1680.5 Z" fill="#fff" stroke="#cbcbcb" stroke-width="1"/><rect x="1771" y="153" width="1" height="1528" fill="#fff"/><path d="M63 152.5 L72.5 143 H1760.5 L1770 152.5 V192 H63 Z" fill="#cfddee"/><rect x="63" y="192" width="1707" height="1" fill="#b7c3d7"/><path d="M460.5 193 V152.5 L468.5 144.5 H796.5 L804.5 152.5 V193" fill="#fff" stroke="#b8c0d2" stroke-width="1"/><rect x="461" y="192" width="343" height="2" fill="#fff"/></svg>
<svg style="position:absolute;left:0;top:0" width="1790" height="200" viewBox="0 0 1790 200"><defs>
<linearGradient id="gg" x1="0" y1="0" x2="0" y2="1"><stop offset="0" stop-color="#8fd27a"/><stop offset="0.5" stop-color="#3f9a4c"/><stop offset="1" stop-color="#4ea55a"/></linearGradient>
<linearGradient id="bulb" x1="0" y1="0" x2="0" y2="1"><stop offset="0" stop-color="#fffbe8"/><stop offset="0.6" stop-color="#fbeaa0"/><stop offset="1" stop-color="#f8d060"/></linearGradient>
</defs><path d="M79 157 H93 L99 163 V183 H79 Z" fill="#f6f8fc" stroke="#a89a60" stroke-width="2"/><path d="M93 157 V163 H99 Z" fill="#e8d8a0"/><path d="M91 164 V175 Q91 179 87 179 Q84 179 83 177" fill="none" stroke="#3b6ea5" stroke-width="3"/><path d="M475 157 H489 L495 163 V183 H475 Z" fill="#f6f8fc" stroke="#a89a60" stroke-width="2"/><path d="M489 157 V163 H495 Z" fill="#e8d8a0"/><path d="M487 164 V175 Q487 179 483 179 Q480 179 479 177" fill="none" stroke="#3b6ea5" stroke-width="3"/><path d="M475 171 L482 184 H468 Z" fill="#f6c35a" stroke="#c88a1a" stroke-width="1.5" stroke-linejoin="round"/><rect x="474" y="175" width="2" height="5" fill="#222"/><rect x="474" y="181" width="2" height="2" fill="#222"/><path d="M768.75 160.75 L773.35 160.75 L776.95 164.95 L779.25 164.95 L782.75 160.75 L787.35 160.75 L787.35 164.95 L783.15 168.75 L783.15 171.15 L787.35 174.85 L787.35 179.25 L782.75 179.25 L779.25 175.05 L776.95 175.05 L773.35 179.25 L768.75 179.25 L768.75 174.85 L772.95 171.15 L772.95 168.75 L768.75 164.95 Z" fill="#fff" stroke="#606060" stroke-width="1.2" stroke-linejoin="miter"/><rect x="1687.75" y="155.75" width="17.5" height="5.5" fill="#fff" stroke="#5c5c5c" stroke-width="1.5"/><rect x="1726.75" y="155.75" width="17.5" height="17.5" fill="#fff" stroke="#5c5c5c" stroke-width="1.5"/><path d="M1727 159.75 H1744" stroke="#5c5c5c" stroke-width="1.5"/></svg>
<div class="t" style="left:110.4px;top:157px;color:#000;transform:scaleX(0.9453);transform-origin:0 0;">PropertiesClassExample.java</div>
<div class="t" style="left:507.5px;top:157px;color:#000;transform:scaleX(0.9198);transform-origin:0 0;">StackClassExample.java</div>
<div style="position:absolute;left:68px;top:198px;width:24px;height:1453px;background:#f7f7f7"></div>
<div style="position:absolute;left:92px;top:198px;width:58px;height:1453px;background:#fff"></div>
<div style="position:absolute;left:150px;top:198px;width:2px;height:1453px;background:#f4f4f4"></div>
<div style="position:absolute;left:68px;top:286px;width:24px;height:2px;background:#0080ff"></div>
<div style="position:absolute;left:68px;top:288px;width:24px;height:1054px;background-color:#fffff5;background-image:linear-gradient(45deg,#0080ff 25%,transparent 25%,transparent 75%,#0080ff 75%),linear-gradient(45deg,#0080ff 25%,transparent 25%,transparent 75%,#0080ff 75%);background-size:4px 4px;background-position:0 0,2px 2px"></div>
<div style="position:absolute;left:152px;top:1298px;width:1555px;height:44px;background:#e8f2fe"></div>
<div class="code" style="left:92px;top:200px;color:#787878"> 1
 2
 3
 4
 5
 6
 7
 8
 9
10
11
12
13
14
15
16
17
18
19
20
21
22
23
24
25
26
27</div>
<div class="code" style="left:156px;top:200px"><span class="k">import</span> java.util.*;

<span class="k">public</span> <span class="k">class</span> StackClassExample {

    <span class="k">public</span> <span class="k">static</span> <span class="k">void</span> main(String[] <span class="v">args</span>) {

        <span class="w">Stack</span> <span class="v">stack</span> = <span class="k">new</span> <span class="w">Stack</span>();

        Random <span class="v">num</span> = <span class="k">new</span> Random();

        <span class="k">for</span>(<span class="k">int</span> <span class="v">i</span> = 0; <span class="v">i</span> &lt; 5; <span class="v">i</span>++)
            <span class="w"><span class="v">stack</span>.push(<span class="v">num</span>.nextInt(100))</span>;

        System.<span class="f">out</span>.println(<span class="s">"Stack elements => "</span> + <span class="v">stack</span>);

        System.<span class="f">out</span>.println(<span class="s">"Top element is "</span> + <span class="v">stack</span>.peek());

        System.<span class="f">out</span>.println(<span class="s">"Removed element is "</span> + <span class="v">stack</span>.pop());

        System.<span class="f">out</span>.println(<span class="s">"Element 50 availability => "</span> + <span class="v">stack</span>.search(50));

        System.<span class="f">out</span>.println(<span class="s">"Stack is empty? - "</span> + <span class="v">stack</span>.isEmpty());

    }

}
</div>
<div style="position:absolute;left:776px;top:286px;width:18px;height:42px;border:1px solid #7f0055"></div>
<svg style="position:absolute;left:131px;top:385px;" width="20" height="20" viewBox="0 0 20 20"><circle cx="10" cy="10" r="7.5" fill="#e6eef7" stroke="#a9b6c8" stroke-width="2"/><rect x="5" y="9" width="10" height="2" fill="#3d4b6b"/></svg>
<div style="position:absolute;left:1707px;top:198px;width:33px;height:1455px;background:#f0f0f0"></div>
<svg style="position:absolute;left:1716px;top:208px;" width="16" height="16" viewBox="0 0 16 16"><path d="M2 11 L8 5 L14 11" fill="none" stroke="#bdbdbd" stroke-width="3"/></svg>
<svg style="position:absolute;left:1716px;top:1627px;" width="16" height="16" viewBox="0 0 16 16"><path d="M2 5 L8 11 L14 5" fill="none" stroke="#bdbdbd" stroke-width="3"/></svg>
<div style="position:absolute;left:1740px;top:198px;width:26px;height:1487px;background:#f7f7f7"></div>
<div style="position:absolute;left:1744px;top:206px;width:16px;height:16px;background:#f4c82d;box-shadow:inset -2px -2px 0 #b0a070"></div>
<div style="position:absolute;left:1740px;top:229px;width:24px;height:2px;background:#aaa"></div>
<div style="position:absolute;left:1744px;top:483px;width:15px;height:4px;background:#f4c82d"></div>
<div style="position:absolute;left:1744px;top:703px;width:15px;height:4px;background:#f4c82d"></div>
<div style="position:absolute;left:68px;top:1651px;width:84px;height:35px;background:#f7f7f7"></div>
<div style="position:absolute;left:152px;top:1653px;width:1588px;height:33px;background:#efefef"></div>
<svg style="position:absolute;left:160px;top:1661px;" width="16" height="16" viewBox="0 0 16 16"><path d="M11 2 L5 8 L11 14" fill="none" stroke="#bdbdbd" stroke-width="3"/></svg>
<svg style="position:absolute;left:1680px;top:1661px;" width="16" height="16" viewBox="0 0 16 16"><path d="M5 2 L11 8 L5 14" fill="none" stroke="#bdbdbd" stroke-width="3"/></svg>
<svg style="position:absolute;left:1770px;top:130px" width="966" height="1570" viewBox="1770 130 966 1570"><path d="M1780 152.5 L1790.5 142 H2663.5 L2674 152.5 V1683 L2665 1692 H1789 L1780 1683 Z" fill="#fff"/><path d="M1781 152.5 L1790.5 143 H2663.5 L2673 152.5 V193 H1781 Z" fill="#f3f5fb"/><defs><linearGradient id="ctab" x1="0" y1="0" x2="0" y2="1"><stop offset="0" stop-color="#d9e1ee"/><stop offset="1" stop-color="#f6f8fc"/></linearGradient></defs><path d="M1781 193 V152.5 L1790.5 143.5 H1955 L1965 153.5 V193 Z" fill="url(#ctab)"/></svg>
<svg style="position:absolute;left:0;top:0" width="2736" height="200" viewBox="0 0 2736 200"><defs>
<linearGradient id="gg" x1="0" y1="0" x2="0" y2="1"><stop offset="0" stop-color="#8fd27a"/><stop offset="0.5" stop-color="#3f9a4c"/><stop offset="1" stop-color="#4ea55a"/></linearGradient>
<linearGradient id="bulb" x1="0" y1="0" x2="0" y2="1"><stop offset="0" stop-color="#fffbe8"/><stop offset="0.6" stop-color="#fbeaa0"/><stop offset="1" stop-color="#f8d060"/></linearGradient>
</defs><rect x="1795" y="157" width="24" height="19" rx="2" fill="#3a6ab8"/><rect x="1799" y="160" width="16" height="12" fill="#e4f4ff" stroke="#7a8aa8" stroke-width="1"/><path d="M1801 164 H1808 M1801 168 H1812" stroke="#3a4a90" stroke-width="1.6"/><rect x="1804" y="176" width="6" height="3" fill="#3a6ab8"/><rect x="1796" y="179" width="23" height="3" fill="#2f5aa0"/><path d="M1930.75 160.75 L1935.35 160.75 L1938.95 164.95 L1941.25 164.95 L1944.75 160.75 L1949.35 160.75 L1949.35 164.95 L1945.15 168.75 L1945.15 171.15 L1949.35 174.85 L1949.35 179.25 L1944.75 179.25 L1941.25 175.05 L1938.95 175.05 L1935.35 179.25 L1930.75 179.25 L1930.75 174.85 L1934.95 171.15 L1934.95 168.75 L1930.75 164.95 Z" fill="#fff" stroke="#606060" stroke-width="1.2" stroke-linejoin="miter"/><rect x="2082" y="155" width="21" height="21" rx="3" fill="#d0d0d0" stroke="#9c9c9c" stroke-width="1.5"/><rect x="2086" y="159" width="13" height="13" fill="#b4b4b4"/><path d="M2121 158 L2126 153 L2131 158 L2136 153 L2141 158 L2136 163 L2141 168 L2136 173 L2131 168 L2126 173 L2121 168 L2126 163 Z" fill="#7a7a7a" stroke="#555" stroke-width="1.5" stroke-linejoin="round"/><path d="M2156 153 L2160 149 L2165 154 L2170 149 L2174 153 L2169 158 L2174 163 L2170 167 L2165 162 L2160 167 L2156 163 L2161 158 Z" fill="#d8d8d8" stroke="#555" stroke-width="1.2"/><path d="M2163 163 L2168 158 L2173 163 L2178 158 L2183 163 L2178 168 L2183 173 L2178 178 L2173 173 L2168 178 L2163 173 L2168 168 Z" fill="#7a7a7a" stroke="#555" stroke-width="1.5" stroke-linejoin="round"/><rect x="2191" y="148" width="1.5" height="34" fill="#555"/><path d="M2203 150 H2217 L2223 156 V174 H2203 Z" fill="#f6f8fc" stroke="#a89a60" stroke-width="2"/><path d="M2217 150 V156 H2223 Z" fill="#e8d8a0"/><path d="M2206 157 H2216 M2206 161 H2218 M2206 165 H2214 M2206 169 H2214" stroke="#4a6aa0" stroke-width="1.5"/><path d="M2221 166 L2231 178 M2231 166 L2221 178" stroke="#333" stroke-width="3"/><rect x="2244" y="150" width="28" height="28" fill="#eaf4fb" stroke="#5a7ab0" stroke-width="1.5"/><rect x="2262" y="152" width="8" height="24" fill="#c8d8ec"/><rect x="2242" y="168" width="15" height="12" rx="1" fill="#e8b030" stroke="#8a5a10" stroke-width="1.5"/><path d="M2245 168 V163 A4.5 4.5 0 0 1 2254 163 V168" fill="none" stroke="#8a5a10" stroke-width="2"/><path d="M2282 150 H2296 L2302 156 V174 H2282 Z" fill="#f6f8fc" stroke="#c8b880" stroke-width="2"/><path d="M2296 150 V156 H2302 Z" fill="#e8d8a0"/><path d="M2285 157 H2295 M2285 161 H2297 M2285 165 H2293" stroke="#8aa0c8" stroke-width="1.5"/><path d="M2307 158 V172 H2294" fill="none" stroke="#e8c070" stroke-width="3.5"/><rect x="2314.5" y="146.5" width="77" height="36" fill="#b6d6f8" stroke="#8cc0f2" stroke-width="1"/><rect x="2353" y="147" width="1" height="35" fill="#a8c8ee"/><rect x="2321" y="160" width="12" height="13" fill="#fff" stroke="#4a80c8" stroke-width="2"/><rect x="2322" y="177" width="9" height="2.5" fill="#4a80c8"/><rect x="2327" y="152" width="22" height="16" fill="#fff" stroke="#4a80c8" stroke-width="2.5"/><path d="M2332 157 H2340 M2332 161 H2345" stroke="#3a5a98" stroke-width="1.6"/><rect x="2360" y="160" width="12" height="13" fill="#fff" stroke="#4a80c8" stroke-width="2"/><rect x="2361" y="177" width="9" height="2.5" fill="#4a80c8"/><rect x="2366" y="152" width="22" height="16" fill="#fff" stroke="#4a80c8" stroke-width="2.5"/><path d="M2369 155 L2375 163 M2375 155 L2369 163" stroke="#e03030" stroke-width="2.5"/><path d="M2379 157 H2384 M2379 161 H2384" stroke="#3a5a98" stroke-width="1.6"/><rect x="2394" y="148" width="1.5" height="34" fill="#555"/><rect x="2408" y="158" width="25" height="19" fill="#eef6fc" stroke="#8a9ab0" stroke-width="1.5"/><rect x="2408" y="158" width="20" height="4" fill="#3d88c8"/><path d="M2420 168 L2425 162" stroke="#333" stroke-width="2"/><ellipse cx="2428" cy="157" rx="5" ry="6" transform="rotate(45 2428 157)" fill="#3aa040" stroke="#1a6a2a" stroke-width="1.5"/><rect x="2448" y="151" width="26" height="21" rx="3" fill="#a8a8a8"/><rect x="2452" y="155" width="18" height="13" fill="#ececec"/><path d="M2455 159 H2461 M2455 163 H2466" stroke="#8a8a8a" stroke-width="1.5"/><rect x="2458" y="172" width="6" height="3" fill="#a8a8a8"/><rect x="2452" y="175" width="19" height="2.5" fill="#a8a8a8"/><path d="M2486 161 L2500 161 L2493 169 Z" fill="#707070"/><rect x="2516.75" y="156.75" width="26.5" height="22.5" fill="#eef8fe" stroke="#9b8a55" stroke-width="1.5"/><path d="M2522 178 Q2538 178 2540 166" fill="none" stroke="#f7e3a0" stroke-width="2"/><rect x="2516" y="156" width="22" height="6" fill="#3d88c8"/><rect x="2518" y="158" width="18" height="2" fill="#5ab8ea"/><path d="M2532 159 L2539 152 L2546 159 L2539 166 Z" fill="#c8a23a" stroke="#a88418" stroke-width="1.5" stroke-linejoin="round"/><path d="M2539 154.5 V163.5 M2534.5 159 H2543.5" stroke="#fff8e0" stroke-width="2"/><path d="M2556 161 L2570 161 L2563 169 Z" fill="#262626"/><rect x="2589.75" y="155.75" width="17.5" height="5.5" fill="#fff" stroke="#5c5c5c" stroke-width="1.5"/><rect x="2628.75" y="155.75" width="17.5" height="17.5" fill="#fff" stroke="#5c5c5c" stroke-width="1.5"/><path d="M2629 159.75 H2646" stroke="#5c5c5c" stroke-width="1.5"/></svg>
<div class="t" style="left:1828.8px;top:157px;color:#000;transform:scaleX(0.9849);transform-origin:0 0;">Console</div>
<div style="position:absolute;left:1780px;top:193px;width:894px;height:1490px;background:#fff"></div>
<div style="position:absolute;left:1786px;top:230px;width:882px;height:1px;background:#a0a0a0"></div>
<div style="position:absolute;left:1780px;top:195px;width:888px;height:34px;overflow:hidden"><div class="t" style="left:7.6px;top:6px;transform:scaleX(0.971);transform-origin:0 0">&lt;terminated&gt; StackClassExample [Java Application] C:\Program Files\Java\jre1.8.0_26 (Feb 2019)</div></div>
<div class="code" style="left:1790px;top:234px">Stack elements => [35, 54, 77, 22, 64]
Top element is 64
Removed element is 64
Element 50 availability => -1
Stack is empty? - false</div>
<div style="position:absolute;left:2635px;top:232px;width:33px;height:1421px;background:#f0f0f0"></div>
<svg style="position:absolute;left:2644px;top:243px;" width="16" height="16" viewBox="0 0 16 16"><path d="M2 11 L8 5 L14 11" fill="none" stroke="#bdbdbd" stroke-width="3"/></svg>
<svg style="position:absolute;left:2644px;top:1627px;" width="16" height="16" viewBox="0 0 16 16"><path d="M2 5 L8 11 L14 5" fill="none" stroke="#bdbdbd" stroke-width="3"/></svg>
<div style="position:absolute;left:1786px;top:1653px;width:882px;height:33px;background:#efefef"></div>
<svg style="position:absolute;left:1794px;top:1661px;" width="16" height="16" viewBox="0 0 16 16"><path d="M11 2 L5 8 L11 14" fill="none" stroke="#bdbdbd" stroke-width="3"/></svg>
<svg style="position:absolute;left:2608px;top:1661px;" width="16" height="16" viewBox="0 0 16 16"><path d="M5 2 L11 8 L5 14" fill="none" stroke="#bdbdbd" stroke-width="3"/></svg>
<svg style="position:absolute;left:0;top:0" width="1800" height="800" viewBox="0 0 1800 800"><defs>
<linearGradient id="gg" x1="0" y1="0" x2="0" y2="1"><stop offset="0" stop-color="#8fd27a"/><stop offset="0.5" stop-color="#3f9a4c"/><stop offset="1" stop-color="#4ea55a"/></linearGradient>
<linearGradient id="bulb" x1="0" y1="0" x2="0" y2="1"><stop offset="0" stop-color="#fffbe8"/><stop offset="0.6" stop-color="#fbeaa0"/><stop offset="1" stop-color="#f8d060"/></linearGradient>
</defs><path d="M75 493 V488 Q69 484 69 479 A6.5 6.5 0 0 1 82 479 Q82 484 78 488 V493 Z" fill="url(#bulb)" stroke="#e8a020" stroke-width="2"/><rect x="71" y="487" width="8" height="7" rx="1" fill="#6a7a90"/><rect x="73" y="489" width="4" height="2" fill="#e8eef4"/><path d="M85 480 L92 494 H78 Z" fill="#fbe08a" stroke="#d08a20" stroke-width="2" stroke-linejoin="round"/><rect x="84" y="484" width="2" height="6" fill="#3a1a00"/><rect x="84" y="491" width="2" height="2" fill="#3a1a00"/><path d="M75 713 V708 Q69 704 69 699 A6.5 6.5 0 0 1 82 699 Q82 704 78 708 V713 Z" fill="url(#bulb)" stroke="#e8a020" stroke-width="2"/><rect x="71" y="707" width="8" height="7" rx="1" fill="#6a7a90"/><rect x="73" y="709" width="4" height="2" fill="#e8eef4"/><path d="M85 700 L92 714 H78 Z" fill="#fbe08a" stroke="#d08a20" stroke-width="2" stroke-linejoin="round"/><rect x="84" y="704" width="2" height="6" fill="#3a1a00"/><rect x="84" y="711" width="2" height="2" fill="#3a1a00"/><rect x="1744.5" y="480.5" width="16" height="8" fill="#fcf0c8" stroke="#f4d050" stroke-width="1"/><rect x="1744.5" y="699.5" width="16" height="8" fill="#fcf0c8" stroke="#f4d050" stroke-width="1"/></svg>
<svg style="position:absolute;left:0;top:1680px" width="2736" height="64" viewBox="0 1680 2736 64"><defs>
<linearGradient id="gg" x1="0" y1="0" x2="0" y2="1"><stop offset="0" stop-color="#8fd27a"/><stop offset="0.5" stop-color="#3f9a4c"/><stop offset="1" stop-color="#4ea55a"/></linearGradient>
<linearGradient id="bulb" x1="0" y1="0" x2="0" y2="1"><stop offset="0" stop-color="#fffbe8"/><stop offset="0.6" stop-color="#fbeaa0"/><stop offset="1" stop-color="#f8d060"/></linearGradient>
</defs><rect x="1292" y="1692" width="1.5" height="44" fill="#a0a0a8"/><rect x="1528" y="1692" width="1.5" height="44" fill="#a0a0a8"/><rect x="1750" y="1692" width="1.5" height="44" fill="#a0a0a8"/><path d="M1972.5 1734 V1692.5 H2040" fill="none" stroke="#e6e6e6" stroke-width="1"/><path d="M1972 1734 H2040.5 V1692" fill="none" stroke="#959595" stroke-width="2"/><rect x="1995" y="1708" width="15" height="15" rx="2" fill="#fff" stroke="#6a9ad8" stroke-width="2.5"/><rect x="1997" y="1710" width="11" height="3" fill="#dff4ff"/><path d="M2001.5 1723 V1727 M1995 1728 H2007" stroke="#6a90c0" stroke-width="2"/><circle cx="1989" cy="1721" r="7.5" fill="#eee8a0" stroke="#8aa0cc" stroke-width="1.8"/><circle cx="1989" cy="1721" r="2" fill="#fff" stroke="#a8b8d8" stroke-width="1.2"/><path d="M1983 1717 Q1981 1710 1986 1708 H1989 V1704 L1997 1710 L1989 1716 V1712 H1987 Q1986 1714 1987 1716 Z" fill="#fcd860" stroke="#b88010" stroke-width="1.6" stroke-linejoin="round"/><rect x="2044" y="1704" width="4" height="4" fill="#8c8472"/><rect x="2044" y="1704" width="4" height="2" fill="#c8c0b0"/><rect x="2044" y="1704" width="2" height="2" fill="#e8e2d6"/><rect x="2044" y="1712" width="4" height="4" fill="#8c8472"/><rect x="2044" y="1712" width="4" height="2" fill="#c8c0b0"/><rect x="2044" y="1712" width="2" height="2" fill="#e8e2d6"/><rect x="2044" y="1719" width="4" height="4" fill="#8c8472"/><rect x="2044" y="1719" width="4" height="2" fill="#c8c0b0"/><rect x="2044" y="1719" width="2" height="2" fill="#e8e2d6"/><rect x="2044" y="1727" width="4" height="4" fill="#8c8472"/><rect x="2044" y="1727" width="4" height="2" fill="#c8c0b0"/><rect x="2044" y="1727" width="2" height="2" fill="#e8e2d6"/><rect x="2688" y="1704" width="4" height="4" fill="#8c8472"/><rect x="2688" y="1704" width="4" height="2" fill="#c8c0b0"/><rect x="2688" y="1704" width="2" height="2" fill="#e8e2d6"/><rect x="2688" y="1712" width="4" height="4" fill="#8c8472"/><rect x="2688" y="1712" width="4" height="2" fill="#c8c0b0"/><rect x="2688" y="1712" width="2" height="2" fill="#e8e2d6"/><rect x="2688" y="1719" width="4" height="4" fill="#8c8472"/><rect x="2688" y="1719" width="4" height="2" fill="#c8c0b0"/><rect x="2688" y="1719" width="2" height="2" fill="#e8e2d6"/><rect x="2688" y="1727" width="4" height="4" fill="#8c8472"/><rect x="2688" y="1727" width="4" height="2" fill="#c8c0b0"/><rect x="2688" y="1727" width="2" height="2" fill="#e8e2d6"/><path d="M2712 1724 V1720 Q2706 1716 2706 1710 A9.8 9.8 0 0 1 2725.5 1710 Q2725.5 1716 2719.5 1720 V1724 Z" fill="url(#bulb)" stroke="#e8a020" stroke-width="2"/><rect x="2711" y="1724" width="10" height="8" rx="1" fill="#5a6a80"/><rect x="2713" y="1726" width="6" height="2" fill="#dfe6ee"/></svg>
<div class="t" style="left:1306.6px;top:1701px;color:#000;transform:scaleX(1.0069);transform-origin:0 0;">Writable</div>
<div class="t" style="left:1541.7px;top:1701px;color:#000;transform:scaleX(0.9792);transform-origin:0 0;">Smart Insert</div>
<div class="t" style="left:1763.0px;top:1701px;color:#000;transform:scaleX(0.9686);transform-origin:0 0;">26 : 2 : 571</div>
<div style="position:absolute;left:871px;top:1707px;width:113px;height:34px;background:#fff;border:1.5px solid #6a6a6a;box-shadow:3px 3px 3px rgba(0,0,0,0.45)"></div>
<div class="t" style="left:876.5px;top:1712px;color:#4a4a4a;transform:scaleX(0.9439);transform-origin:0 0;">Task View</div>
</body></html>
